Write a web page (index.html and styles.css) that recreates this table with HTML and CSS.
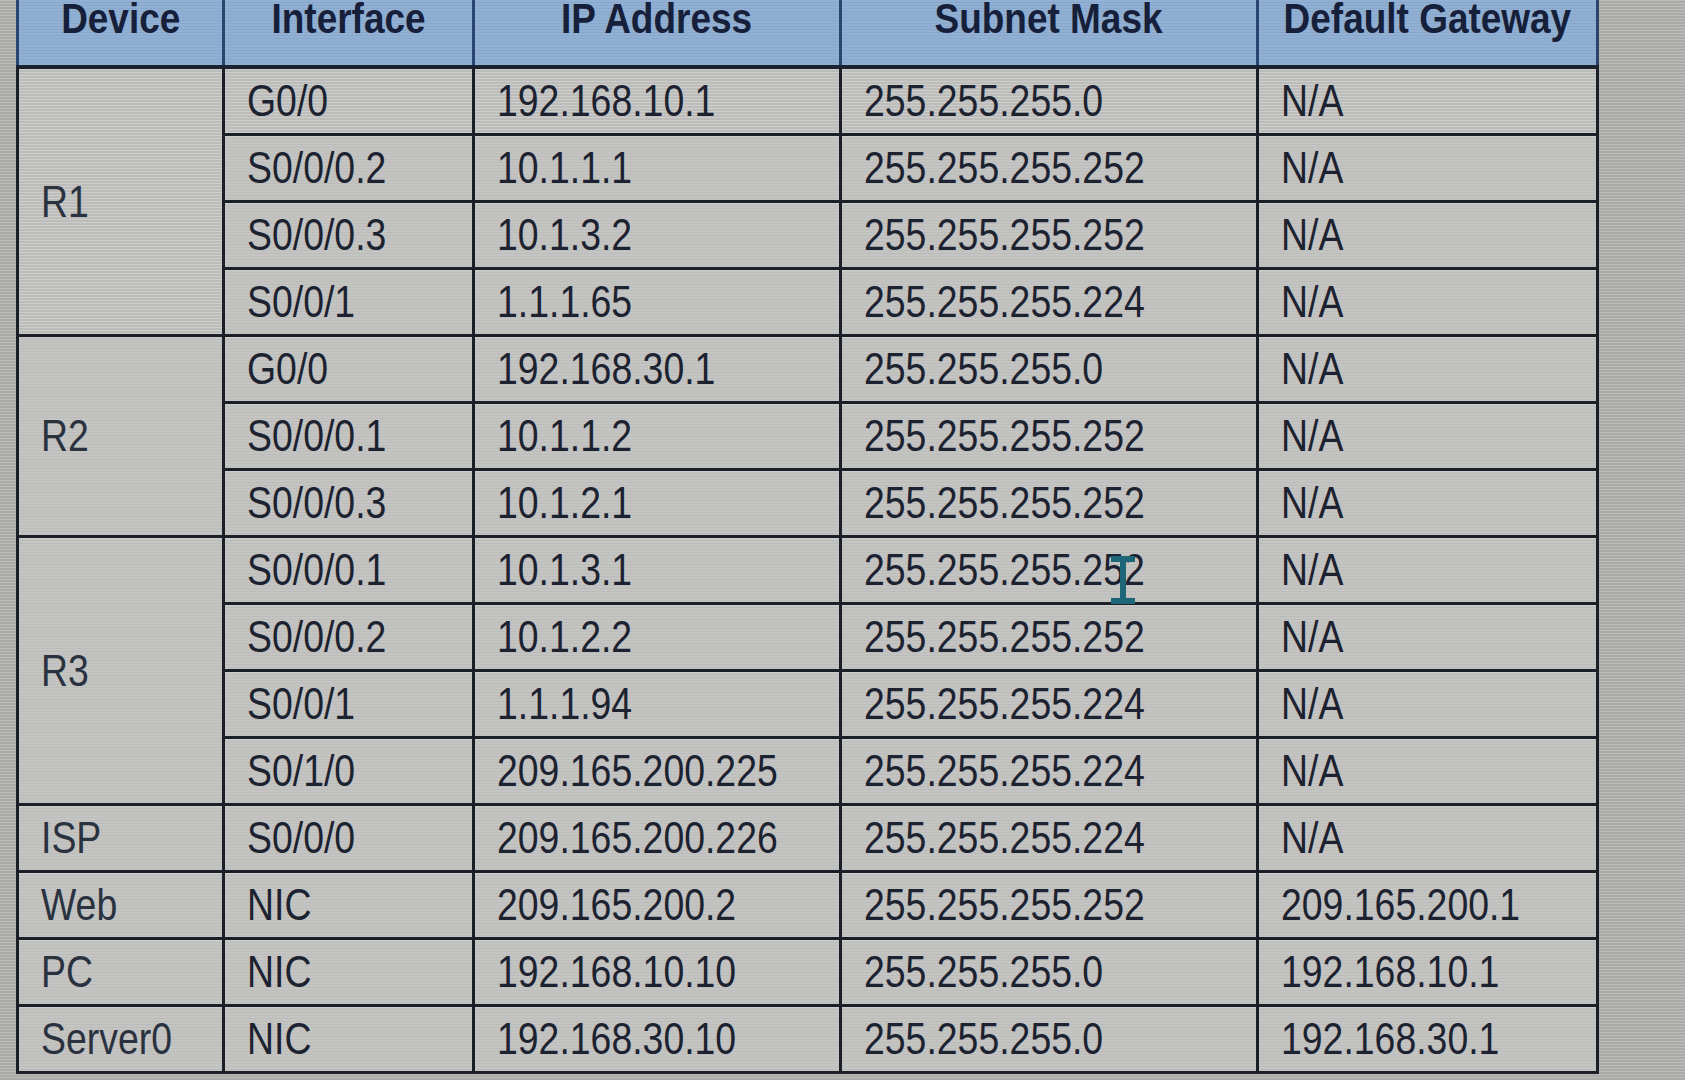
FILE: index.html
```html
<!DOCTYPE html>
<html>
<head>
<meta charset="utf-8">
<link rel="stylesheet" href="styles.css">
</head>
<body>
<div class="screen">
<table class="addr">
<colgroup>
<col class="c1"><col class="c2"><col class="c3"><col class="c4"><col class="c5">
</colgroup>
<thead>
<tr><th><span>Device</span></th><th><span>Interface</span></th><th><span>IP Address</span></th><th><span>Subnet Mask</span></th><th><span>Default Gateway</span></th></tr>
</thead>
<tbody>
<tr><td rowspan="4" class="dev"><span>R1</span></td><td><span>G0/0</span></td><td><span>192.168.10.1</span></td><td><span>255.255.255.0</span></td><td><span>N/A</span></td></tr>
<tr><td><span>S0/0/0.2</span></td><td><span>10.1.1.1</span></td><td><span>255.255.255.252</span></td><td><span>N/A</span></td></tr>
<tr><td><span>S0/0/0.3</span></td><td><span>10.1.3.2</span></td><td><span>255.255.255.252</span></td><td><span>N/A</span></td></tr>
<tr><td><span>S0/0/1</span></td><td><span>1.1.1.65</span></td><td><span>255.255.255.224</span></td><td><span>N/A</span></td></tr>
<tr><td rowspan="3" class="dev"><span>R2</span></td><td><span>G0/0</span></td><td><span>192.168.30.1</span></td><td><span>255.255.255.0</span></td><td><span>N/A</span></td></tr>
<tr><td><span>S0/0/0.1</span></td><td><span>10.1.1.2</span></td><td><span>255.255.255.252</span></td><td><span>N/A</span></td></tr>
<tr><td><span>S0/0/0.3</span></td><td><span>10.1.2.1</span></td><td><span>255.255.255.252</span></td><td><span>N/A</span></td></tr>
<tr><td rowspan="4" class="dev"><span>R3</span></td><td><span>S0/0/0.1</span></td><td><span>10.1.3.1</span></td><td class="curcell"><span>255.255.255.252</span><svg class="ibeam" width="30" height="48" viewBox="0 0 30 48"><path d="M3 3h24M15 3v42M3 45h24" stroke="#1d6678" stroke-width="6" fill="none"/></svg></td><td><span>N/A</span></td></tr>
<tr><td><span>S0/0/0.2</span></td><td><span>10.1.2.2</span></td><td><span>255.255.255.252</span></td><td><span>N/A</span></td></tr>
<tr><td><span>S0/0/1</span></td><td><span>1.1.1.94</span></td><td><span>255.255.255.224</span></td><td><span>N/A</span></td></tr>
<tr><td><span>S0/1/0</span></td><td><span>209.165.200.225</span></td><td><span>255.255.255.224</span></td><td><span>N/A</span></td></tr>
<tr><td class="dev"><span>ISP</span></td><td><span>S0/0/0</span></td><td><span>209.165.200.226</span></td><td><span>255.255.255.224</span></td><td><span>N/A</span></td></tr>
<tr><td class="dev"><span>Web</span></td><td><span>NIC</span></td><td><span>209.165.200.2</span></td><td><span>255.255.255.252</span></td><td><span>209.165.200.1</span></td></tr>
<tr><td class="dev"><span>PC</span></td><td><span>NIC</span></td><td><span>192.168.10.10</span></td><td><span>255.255.255.0</span></td><td><span>192.168.10.1</span></td></tr>
<tr><td class="dev"><span>Server0</span></td><td><span>NIC</span></td><td><span>192.168.30.10</span></td><td><span>255.255.255.0</span></td><td><span>192.168.30.1</span></td></tr>
</tbody>
</table>
</div>
</body>
</html>
```
FILE: styles.css
```css
html, body {
  margin: 0;
  padding: 0;
  height: 100%;
  overflow: hidden;
}
body {
  background-color: #b3b3b1;
  background-image: repeating-linear-gradient(to bottom, rgba(255,255,255,0.10) 0 1px, rgba(0,0,0,0.05) 1px 3px);
  font-family: "Liberation Sans", Arial, sans-serif;
}
.screen {
  padding-left: 16px;
  margin-top: -12px;
}
.addr {
  border-collapse: collapse;
  table-layout: fixed;
  width: 1580px;
  color: #1c2230;
}
.c1 { width: 206px; }
.c2 { width: 250px; }
.c3 { width: 367px; }
.c4 { width: 417px; }
.c5 { width: 340px; }
.addr th {
  height: 56px;
  background-color: #8fb1d6;
  background-image: repeating-linear-gradient(to bottom, rgba(255,255,255,0.10) 0 1px, rgba(0,0,0,0.05) 1px 3px);
  font-size: 42px;
  font-weight: bold;
  text-align: center;
  vertical-align: middle;
  border: 3px solid #2a4670;
  border-bottom: 4px solid #1b2230;
  color: #16203a;
  padding: 0 0 18px 0;
  white-space: nowrap;
  line-height: 1;
}
.addr th span {
  display: inline-block;
  transform: scaleX(0.88);
  transform-origin: center;
}
.addr td {
  height: 64px;
  background-color: #c6c6c4;
  background-image: repeating-linear-gradient(to bottom, rgba(255,255,255,0.12) 0 1px, rgba(0,0,0,0.05) 1px 3px);
  font-size: 44px;
  padding: 0 0 0 22px;
  border: 3px solid #1b2028;
  vertical-align: middle;
  white-space: nowrap;
  line-height: 1;
}
.addr td span {
  display: inline-block;
  transform: scaleX(0.85);
  transform-origin: left center;
}
.addr td.dev {
  color: #2a3240;
}
.curcell {
  position: relative;
}
.ibeam {
  position: absolute;
  left: 266px;
  top: 18px;
}
```
